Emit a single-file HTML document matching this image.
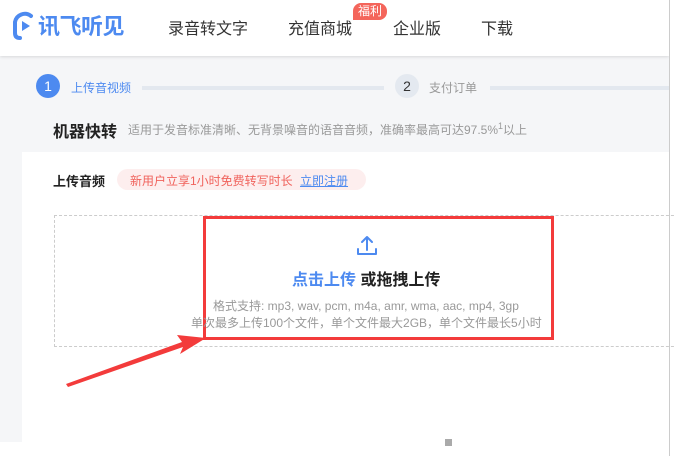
<!DOCTYPE html><html><head><meta charset="utf-8"><style>
*{margin:0;padding:0;box-sizing:border-box}
body{width:674px;height:456px;overflow:hidden;background:#f5f6f8;font-family:"Liberation Sans","Noto Sans CJK SC",sans-serif;position:relative}
.a{position:absolute;white-space:nowrap}
</style></head><body>
<div class="a" style="left:0;top:0;width:669px;height:56px;background:#fff;box-shadow:0 1px 3px rgba(0,0,0,.12)"></div>
<div class="a" style="left:669px;top:0;width:5px;height:456px;background:#fff;border-left:1px solid #ccc"></div>
<svg class="a" style="left:11px;top:9px" width="24" height="32" viewBox="0 0 24 32"><path d="M20 7A10 10 0 0 0 4 13v11q0 5 5 5" fill="none" stroke="#4d8af0" stroke-width="4" stroke-linecap="round"/><path d="M11 12l8 5-8 5z" fill="#4d8af0"/></svg>
<div class="a" style="left:38px;top:9px;font-size:22px;font-weight:bold;color:#4d8af0;letter-spacing:-0.5px">讯飞听见</div>
<div class="a" style="left:168px;top:15px;font-size:16px;color:#333">录音转文字</div>
<div class="a" style="left:288px;top:15px;font-size:16px;color:#333">充值商城</div>
<div class="a" style="left:353px;top:3px;padding:0 5px;height:17px;line-height:17px;background:#f4655b;color:#fff;font-size:12px;border-radius:8px 8px 8px 0">福利</div>
<div class="a" style="left:393px;top:15px;font-size:16px;color:#333">企业版</div>
<div class="a" style="left:481px;top:15px;font-size:16px;color:#333">下载</div>
<div class="a" style="left:36px;top:74px;width:24px;height:24px;border-radius:50%;background:#4d8af0;color:#fff;font-size:14px;text-align:center;line-height:24px">1</div>
<div class="a" style="left:71px;top:79px;font-size:12px;color:#4d8af0">上传音视频</div>
<div class="a" style="left:142px;top:86px;width:242px;height:4px;background:#e3e8ef"></div>
<div class="a" style="left:395px;top:74px;width:24px;height:24px;border-radius:50%;background:#e4e9f0;color:#333;font-size:14px;text-align:center;line-height:24px">2</div>
<div class="a" style="left:429px;top:79px;font-size:12px;color:#999">支付订单</div>
<div class="a" style="left:490px;top:86px;width:179px;height:4px;background:#e3e8ef"></div>
<div class="a" style="left:53px;top:118px;font-size:16px;font-weight:bold;color:#222">机器快转</div>
<div class="a" style="left:128px;top:121px;font-size:12px;color:#999">适用于发音标准清晰、无背景噪音的语音音频，准确率最高可达97.5%<sup style="font-size:9px">1</sup>以上</div>
<div class="a" style="left:22px;top:152px;width:647px;height:290px;background:#fff"></div>
<div class="a" style="left:53px;top:171px;font-size:13px;font-weight:bold;color:#222">上传音频</div>
<div class="a" style="left:117px;top:169px;width:249px;height:21px;border-radius:11px;background:#fdeeee"></div>
<div class="a" style="left:130px;top:172px;font-size:12px;color:#f0625c">新用户立享1小时免费转写时长 <span style="color:#4d8af0;text-decoration:underline;margin-left:4px">立即注册</span></div>
<div class="a" style="left:54px;top:215px;width:640px;height:132px;border:1px dashed #ccc"></div>
<div class="a" style="left:203px;top:216px;width:351px;height:124px;border:3px solid #f33b3b"></div>
<svg class="a" style="left:355px;top:234px" width="24" height="24" viewBox="0 0 24 24" fill="none" stroke="#4d8af0" stroke-width="2" stroke-linecap="round" stroke-linejoin="round"><path d="M12 16V3M7 8l5-5 5 5M3 15v5h18v-5"/></svg>
<div class="a" style="left:292px;top:266px;font-size:16px;font-weight:bold;color:#4d8af0">点击上传 <span style="color:#222">或拖拽上传</span></div>
<div class="a" style="left:213px;top:297px;font-size:12px;color:#999">格式支持: mp3, wav, pcm, m4a, amr, wma, aac, mp4, 3gp</div>
<div class="a" style="left:191px;top:314px;font-size:12px;color:#999">单次最多上传100个文件，单个文件最大2GB，单个文件最长5小时</div>
<svg class="a" style="left:0;top:0" width="674" height="456"><path d="M68 387L183 347 180 354 206 338 177 335 182 342 66 384z" fill="#f33b3b"/></svg>
<div class="a" style="left:0;top:442px;width:669px;height:14px;background:#fff"></div>
<div class="a" style="left:445px;top:439px;width:7px;height:7px;background:#aaa"></div>
</body></html>
